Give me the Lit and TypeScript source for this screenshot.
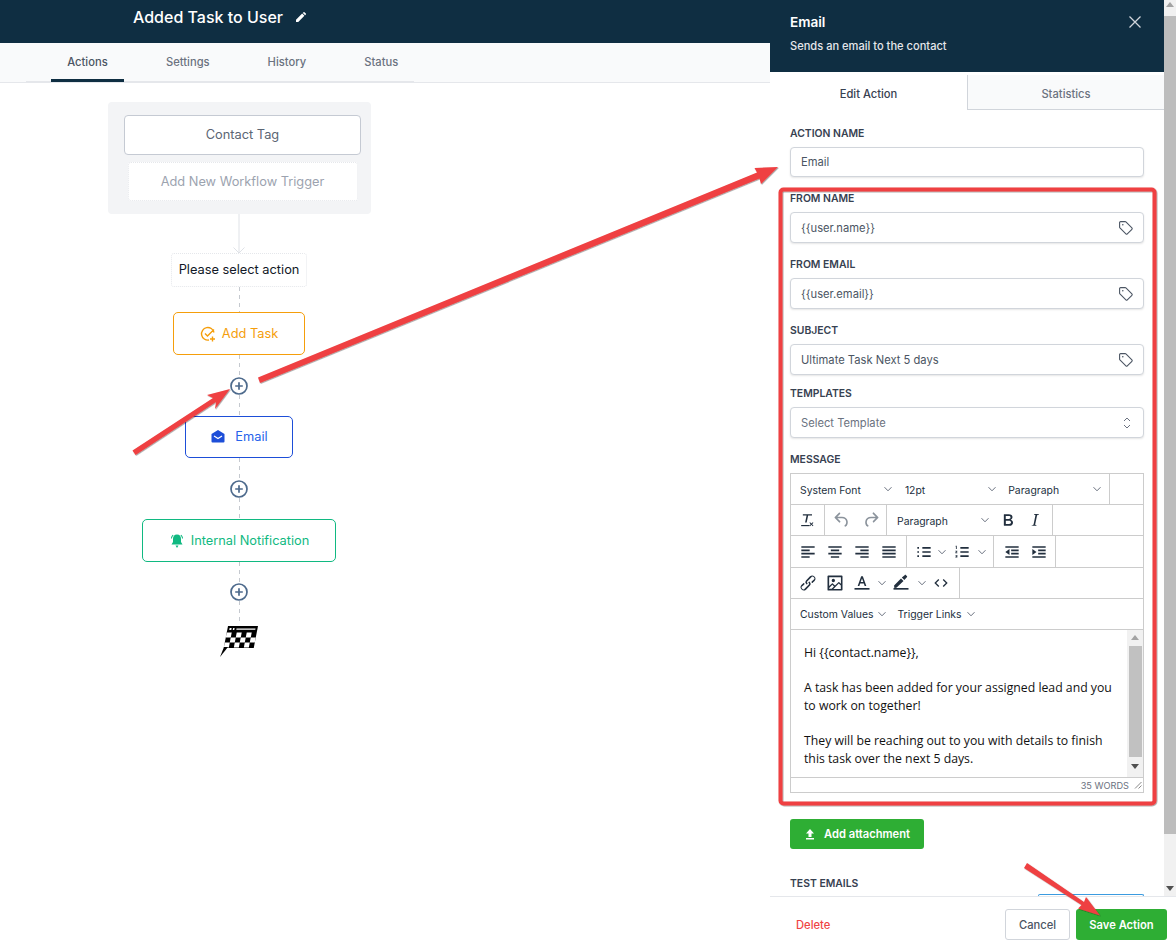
import { LitElement, html, css, svg } from "lit";
import { customElement } from "lit/decorators.js";

const chev = (c = "chev") => html`<svg class=${c} viewBox="0 0 10 10"><path d="M1.5 3.2 5 6.8l3.5-3.6" fill="none" stroke="currentColor" stroke-width="1"/></svg>`;
const tag = html`<svg class="tag" viewBox="0 0 16 16"><path d="M1.6 2.6a1 1 0 0 1 1-1h4.6a1 1 0 0 1 .7.3l6 6a1 1 0 0 1 0 1.4l-4.6 4.6a1 1 0 0 1-1.4 0l-6-6a1 1 0 0 1-.3-.7z" fill="none" stroke="#4b5563" stroke-width="1.1"/><circle cx="4.8" cy="4.8" r=".8" fill="#4b5563"/></svg>`;
const plus = html`<svg class="plus" viewBox="0 0 18 18"><circle cx="9" cy="9" r="8" fill="#fff" stroke="#4d6a8c" stroke-width="1.7"/><path d="M9 5.2v7.6M5.2 9h7.6" stroke="#4d6a8c" stroke-width="1.7"/></svg>`;

const icon = (d: unknown, c = "ic") => html`<svg class=${c} viewBox="0 0 24 24" fill="#222f3e">${d}</svg>`;
const P = (d: string) => svg`<path d=${d} fill-rule="evenodd"/>`;
const I = {
  clear: svg`<path d="M8 5h11v1.6h-4.6L12.6 15h-1.9l1.8-8.4H8z" transform="translate(-1 0)"/><path d="M5 18h10v1.4H5z"/><path d="m15.7 14.6 1.6 1.6 1.6-1.6.8.8-1.6 1.6 1.6 1.6-.8.8-1.6-1.6-1.6 1.6-.8-.8 1.6-1.6-1.6-1.6z"/>`,
  undo: P("M6.4 8H12c3.7 0 6.2 2 6.8 5.1.6 2.7-.4 5.6-2.3 6.8a1 1 0 0 1-1-1.8c1.1-.6 1.8-2.7 1.4-4.6-.5-2.1-2.1-3.5-4.9-3.5H6.4l3.3 3.3a1 1 0 1 1-1.4 1.4l-5-5a1 1 0 0 1 0-1.4l5-5a1 1 0 0 1 1.4 1.4L6.4 8z"),
  redo: P("M17.6 10H12c-2.8 0-4.4 1.4-4.9 3.5-.4 2 .3 4 1.4 4.6a1 1 0 1 1-1 1.8c-2-1.2-2.9-4.1-2.3-6.8.6-3 3-5.1 6.8-5.1h5.6l-3.3-3.3a1 1 0 1 1 1.4-1.4l5 5a1 1 0 0 1 0 1.4l-5 5a1 1 0 0 1-1.4-1.4l3.3-3.3z"),
  bold: P("M7.8 19c-.3 0-.5 0-.6-.2l-.2-.5V5.7c0-.2 0-.4.2-.5l.6-.2h5c1.5 0 2.7.3 3.5 1 .7.6 1.1 1.4 1.1 2.5a3 3 0 0 1-.6 1.9c-.4.6-1 1-1.6 1.2.4.1.9.3 1.3.6s.8.7 1 1.2c.4.4.5 1 .5 1.6 0 1.3-.4 2.3-1.3 3-.8.7-2.1 1-3.8 1H7.8zm5-8.3c.6 0 1.2-.1 1.6-.5.4-.3.6-.7.6-1.3 0-1.1-.8-1.7-2.3-1.7H9.3v3.5h3.4zm.5 6c.7 0 1.3-.1 1.7-.4.4-.4.6-.9.6-1.5s-.2-1-.7-1.4c-.4-.3-1-.4-2-.4H9.4v3.8h4z"),
  italic: P("M16.7 4.7l-.1.9h-.3c-.6 0-1 0-1.4.3-.3.3-.4.6-.5 1.1l-2.1 9.8v.6c0 .5.4.8 1.4.8h.2l-.2.8H8l.2-.8h.2c1.1 0 1.8-.5 2-1.5l2-9.8.1-.5c0-.6-.4-.8-1.4-.8h-.3l.2-.9h5.8z"),
  left: P("M4 5h16v2H4zM4 9h10v2H4zM4 13h16v2H4zM4 17h10v2H4z"),
  center: P("M4 5h16v2H4zM7 9h10v2H7zM4 13h16v2H4zM7 17h10v2H7z"),
  right: P("M4 5h16v2H4zM10 9h10v2H10zM4 13h16v2H4zM10 17h10v2H10z"),
  justify: P("M4 5h16v2H4zM4 9h16v2H4zM4 13h16v2H4zM4 17h16v2H4z"),
  bullets: P("M10 6h10v2H10zM10 11h10v2H10zM10 16h10v2H10zM4 6h2v2H4zM4 11h2v2H4zM4 16h2v2H4z"),
  numbers: P("M10 6h10v2H10zM10 11h10v2H10zM10 16h10v2H10zM4.5 4.5h1.2v3.8H4.7V5.4h-.6zM4 10.500h2.400v.8l-1.400 1.300h1.400v.9H4v-.8l1.400-1.300H4zM4 15.500h2.400v3H4v-.7h1.400v-.4H4.500v-.7h.9v-.4H4z"),
  outdent: P("M4 5h16v2H4zM11 9h9v2h-9zM11 13h9v2h-9zM4 17h16v2H4zM9 8.500v7L4 12z"),
  indent: P("M4 5h16v2H4zM11 9h9v2h-9zM11 13h9v2h-9zM4 17h16v2H4zM4 8.500v7L9 12z"),
  link: P("M6.2 12.300a1 1 0 0 1 1.400 1.400l-2 2a2 2 0 1 0 2.600 2.800l4.800-4.800a1 1 0 0 0 0-1.400 1 1 0 1 1 1.400-1.300 2.900 2.900 0 0 1 0 4L9.600 20a3.900 3.900 0 0 1-5.500-5.500l2-2zm11.600-.6a1 1 0 0 1-1.400-1.400l2-2a2 2 0 1 0-2.600-2.800L11 10.300a1 1 0 0 0 0 1.400 1 1 0 1 1-1.400 1.300 2.900 2.900 0 0 1 0-4L14.400 4a3.900 3.900 0 0 1 5.500 5.500l-2 2z"),
  image: P("M5 15.700l3.300-3.200c.3-.3.7-.3 1 0L12 15l4.100-4c.3-.4.8-.4 1 0l2 1.900V5H5v10.700zM5 18V19h3l2.800-2.900-2-2L5 17.900zm14-3l-2.500-2.400-6.400 6.500H19v-4zM4 3h16c.6 0 1 .4 1 1v16c0 .6-.4 1-1 1H4a1 1 0 0 1-1-1V4c0-.6.400-1 1-1zm6 8a2 2 0 1 0 0-4 2 2 0 0 0 0 4z"),
  color: svg`<path d="M3 18h18v2H3z" fill="#222f3e"/><path fill-rule="evenodd" d="M11 4h2l4.200 11.500h-2l-1-3h-4.400l-1 3h-2zm-.6 6.800h3.200L12 6.500z"/>`,
  hilite: svg`<path d="M3 18h18v2H3z"/><path d="M4 16.500l2.500-.3L15 8l-3-3-8.300 8.500zM13 4l3 3 3-3.300c.6-.6.400-1.200 0-1.600l-1-1c-.5-.5-1.100-.5-1.600 0z" transform="translate(0 1.500)"/>`,
  code: svg`<path transform="translate(2.400 2.400) scale(.8)" d="M9.400 7.400 4.800 12l4.600 4.600L8 18l-6-6 6-6zM14.600 7.400 19.200 12l-4.600 4.600L16 18l6-6-6-6z"/>`,
};

@customElement("app-root")
export class AppRoot extends LitElement {
  static styles = css`
    :host { display: block; width: 1176px; height: 946px; position: relative; overflow: hidden; background: #fff; font-family: Inter, "Liberation Sans", sans-serif; color: #374151; }
    * { box-sizing: border-box; }
    .page { display: flex; height: 946px; }
    .main { width: 770px; flex: none; display: flex; flex-direction: column; }
    .topbar { height: 43px; flex: none; background: #0f2e42; color: #fff; display: flex; align-items: center; padding: 0 0 9px 133px; gap: 13px; font-size: 16px; font-weight: 500; }
    .pencil { width: 10px; height: 10px; }
    .tabbar { height: 40px; flex: none; background: #f9fafb; border-bottom: 1px solid #e5e7eb; padding-left: 26px; }
    .tabs { width: 388px; height: 39px; border-bottom: 1px solid #e5e7eb; display: flex; padding-left: 25px; }
    .tab { height: 39px; font-size: 11.2px; font-weight: 500; color: #6b7280; display: flex; align-items: center; justify-content: center; padding-bottom: 1px; }
    .tab.on { border-bottom: 3px solid #0f2e42; color: #4b5563; padding-top: 2px; padding-bottom: 0; }
    .canvas { width: 478px; padding-top: 19px; display: flex; flex-direction: column; align-items: center; }
    .trigger { width: 263px; height: 112px; margin-left: 1px; background: #f3f4f6; border-radius: 4px; display: flex; flex-direction: column; align-items: center; padding: 13px 10px 0 16px; }
    .trig-main { width: 237px; height: 40px; flex: none; background: #fff; border: 1px solid #c5cad3; border-radius: 4px; display: flex; align-items: center; justify-content: center; font-size: 12.8px; color: #5b6573; padding-bottom: 2px; }
    .trig-add { width: 230px; height: 39px; flex: none; margin-top: 7px; background: #fff; border: 1px dotted #e5e7eb; border-radius: 3px; display: flex; align-items: center; justify-content: center; font-size: 12.8px; color: #9ca3af; }
    .arrowline { width: 14px; height: 40px; display: block; flex: none; }
    .select { width: 136px; height: 34px; flex: none; margin-top: -1px; border: 1px dotted #e5e7eb; border-radius: 3px; display: flex; align-items: center; justify-content: center; font-size: 12.8px; color: #111827; padding-bottom: 2px; }
    .dash { width: 1px; flex: none; background-image: repeating-linear-gradient(to bottom, #c5c9cf 0 4px, transparent 4px 8px); }
    .node { height: 43px; flex: none; border: 1px solid; border-radius: 5px; display: flex; align-items: center; justify-content: center; gap: 6px; font-size: 12.8px; background: #fff; }
    .n1 { width: 132px; border-color: #f59e0b; color: #f59e0b; }
    .n2 { width: 108px; height: 42px; border-color: #1d4ed8; color: #2563eb; gap: 9px; padding-bottom: 2px; }
    .n3 { width: 194px; border-color: #10b981; color: #10b981; }
    .node svg { width: 16px; height: 16px; flex: none; }
    .plus { width: 18px; height: 18px; flex: none; display: block; }
    .flag { width: 40px; height: 33px; flex: none; display: block; margin-top: 5px; margin-left: 1px; }

    .panel { width: 394px; flex: none; height: 946px; display: flex; flex-direction: column; background: #fff; }
    .phead { height: 72px; flex: none; background: #0f2e42; color: #fff; padding: 14px 20px 0; display: flex; justify-content: space-between; }
    .ptitle { font-size: 13.6px; font-weight: 600; line-height: 16px; }
    .psub { font-size: 11.1px; font-weight: 500; line-height: 14px; margin-top: 9px; color: #e5e7eb; }
    .close { width: 16px; height: 16px; margin: 0 1px 0 0; }
    .ptabs { height: 38px; flex: none; display: flex; }
    .ptab { display: flex; align-items: center; justify-content: center; font-size: 11.200px; font-weight: 500; }
    .ptab.a { width: 197px; color: #374151; padding-top: 5px; }
    .ptab.b { flex: 1; margin-top: 3px; background: #f9fafb; color: #6b7280; border-left: 1px solid #d1d5db; border-bottom: 1px solid #d1d5db; padding-top: 3px; }
    .form { flex: 1; min-height: 0; overflow: hidden; padding: 17px 20px 0; }
    .lbl { font-size: 10.400px; font-weight: 600; line-height: 14px; color: #374151; height: 12px; }
    .inp { height: 31px; margin-top: 8px; border: 1px solid #d1d5db; border-radius: 4px; box-shadow: 0 1px 2px rgba(0,0,0,.1); display: flex; align-items: center; justify-content: space-between; padding: 0 9px 0 10px; font-size: 11.200px; color: #4b5563; background: #fff; }
    .inp.first { height: 30px; }
    .field { margin-bottom: 15px; }
    .field.tight { margin-bottom: 12px; }
    .tag { width: 16px; height: 16px; }
    .sel { color: #6b7280; }
    .updown { width: 10px; height: 16px; margin-right: 2px; }
    .ed { height: 320px; margin-top: 8px; border: 1px solid #ccc; display: flex; flex-direction: column; color: #222f3e; }
    .row { display: flex; height: 31px; flex: none; border-bottom: 1px solid #ccc; align-items: stretch; font-size: 10.400px; }
    .row.h32 { height: 32px; }
    .row.links { align-items: center; padding-left: 9px; }
    .grp { display: flex; align-items: center; border-right: 1px solid #ccc; flex: none; }
    .grp .t { padding-top: 2px; }
    .ic { width: 20px; height: 20px; display: block; flex: none; }
    .ic.dim { fill: #8b939c; }
    .cell { width: 27px; display: flex; justify-content: center; flex: none; }
    .chev { width: 10px; height: 10px; flex: none; color: #6b7280; }
    .t { white-space: nowrap; color: #222f3e; }
    .gap { display: flex; }
    .body { flex: 1; min-height: 0; display: flex; }
    .text { flex: 1; padding: 14px 10px 0 13px; font-family: "Open Sans", "Noto Sans", sans-serif; font-size: 12.25px; line-height: 18px; color: #111; }
    .text p { margin: 0 0 17px; }
    .sb { width: 16px; flex: none; background: #f1f1f1; display: flex; flex-direction: column; align-items: center; }
    .sb i { display: block; width: 13px; background: #c1c1c1; }
    .status { height: 15px; flex: none; border-top: 1px solid #ccc; display: flex; justify-content: flex-end; align-items: center; font-size: 9.200px; color: #6b7280; padding-right: 1px; gap: 5px; }
    .grip { width: 8px; height: 8px; }
    .btn-g { height: 30px; background: #2eae34; color: #fff; border-radius: 3px; display: flex; align-items: center; justify-content: center; font-size: 11.200px; font-weight: 600; }
    .attach { width: 134px; margin-top: 26px; gap: 8px; }
    .attach svg { width: 12px; height: 12px; }
    .test { margin-top: 28px; }
    .tip { height: 2px; width: 106px; margin: 5px 0 0 248px; border: 1px solid #3b9be0; border-bottom: 0; border-radius: 3px 3px 0 0; }
    .foot { height: 50px; flex: none; border-top: 1px solid #e5e7eb; width: 406px; background: #fff; display: flex; align-items: flex-start; padding: 12px 9px 0 26px; font-size: 11.200px; position: relative; }
    .del { color: #ef4444; margin-top: 9px; font-weight: 500; flex: 1; }
    .cancel { width: 65px; height: 31px; border: 1px solid #d1d5db; border-radius: 3px; display: flex; align-items: center; justify-content: center; font-weight: 500; color: #4b5563; margin-right: 6px; background: #fff; }
    .save { width: 91px; height: 31px; }
    .vbar { width: 12px; flex: none; height: 896px; background: #f1f1f1; display: flex; flex-direction: column; align-items: center; }
    .vbar b { display: block; width: 12px; height: 818px; background: #bdbdbd; margin-top: 9px; }
    .ua { width: 0; height: 0; border-left: 4px solid transparent; border-right: 4px solid transparent; }
    .ua.up { border-bottom: 5px solid #a3a3a3; margin-top: 2px; }
    .ua.dn { border-top: 5px solid #505050; }
    .overlay { position: absolute; left: 0; top: 0; width: 1176px; height: 946px; pointer-events: none; }
  `;

  field(label: string, value: string, first = false) {
    return html`<div class="field ${label === "SUBJECT" ? "tight" : ""}"><div class="lbl">${label}</div><div class="inp ${first ? "first" : ""}"><span>${value}</span>${first ? "" : tag}</div></div>`;
  }

  cell(d: unknown, w = 27, dim = false) {
    return html`<span class="cell" style="width:${w}px">${icon(d, dim ? "ic dim" : "ic")}</span>`;
  }

  flagCells() {
    const out = [];
    for (let y = 0; y < 3; y++) for (let x = 0; x < 6; x++) if ((x + y) % 2 === 0) out.push(svg`<rect x=${x * 5} y=${6.5 + y * 5} width="5" height="5"/>`);
    return out;
  }

  render() {
    return html`
      <div class="page">
        <div class="main">
          <div class="topbar"><span>Added Task to User</span>
            <svg class="pencil" viewBox="0 0 12 12"><path d="M0 12v-2.700L7.400 1.900l2.700 2.700L2.700 12zM8.200 1.100 9.100.2a.7.7 0 0 1 1 0l1.700 1.700a.7.7 0 0 1 0 1l-.9.900z" fill="#fff"/></svg>
          </div>
          <div class="tabbar"><div class="tabs">
            <div class="tab on" style="width:73px">Actions</div>
            <div class="tab" style="margin-left:42px">Settings</div>
            <div class="tab" style="margin-left:58px">History</div>
            <div class="tab" style="margin-left:58px">Status</div>
          </div></div>
          <div class="canvas">
            <div class="trigger"><div class="trig-main">Contact Tag</div><div class="trig-add">Add New Workflow Trigger</div></div>
            <svg class="arrowline" viewBox="0 0 14 40"><path d="M7 0v39M1.500 33.500 7 39l5.500-5.500" fill="none" stroke="#dfe2e7" stroke-width="1"/></svg>
            <div class="select">Please select action</div>
            <div class="dash" style="height:25px"></div>
            <div class="node n1"><svg viewBox="0 0 16 16" fill="none" stroke="#f59e0b" stroke-width="1.400"><path d="M14 6.500A6.300 6.300 0 1 0 9 14M5 7.500l2.500 2.500L14 3.500M12.500 10.500v5M10 13h5"/></svg>Add Task</div>
            <div class="dash" style="height:22px"></div>${plus}<div class="dash" style="height:21px"></div>
            <div class="node n2"><svg viewBox="0 0 16 16"><path d="M1.500 6 8 2l6.500 4v7.500a1 1 0 0 1-1 1h-11a1 1 0 0 1-1-1z" fill="#1d4ed8"/><path d="m4 8 4 2.500L12 8" stroke="#fff" stroke-width="1.200" fill="none"/></svg>Email</div>
            <div class="dash" style="height:22px"></div>${plus}<div class="dash" style="height:21px"></div>
            <div class="node n3"><svg viewBox="0 0 16 16" fill="#10b981"><path d="M8 1.500c2.800 0 4 2 4 4.500v3l1.500 2.500h-11L4 9V6c0-2.500 1.200-4.500 4-4.500zM6.500 12.500h3L8 15zM2 5.500c0-1.500.7-2.800 1.800-3.700l.7.700C3.600 3.300 3 4.300 3 5.500zM14 5.500c0-1.500-.7-2.800-1.800-3.700l-.7.700c.9.800 1.500 1.800 1.500 3z"/></svg>Internal Notification</div>
            <div class="dash" style="height:21px"></div>${plus}<div class="dash" style="height:20px"></div>
            <svg class="flag" viewBox="0 0 40 33">
              <g transform="translate(8 0) skewX(-11)"><rect width="30" height="22"/><g fill="#fff"><rect x="2" y="2" width="2" height="2"/><rect x="5.500" y="2" width="1.500" height="2"/><rect x="9" y="2.500" width="19" height="1.200"/>${this.flagCells()}</g></g>
              <path d="M0 31 4 21h4z"/>
            </svg>
          </div>
        </div>

        <div class="panel">
          <div class="phead"><div><div class="ptitle">Email</div><div class="psub">Sends an email to the contact</div></div>
            <svg class="close" viewBox="0 0 16 16"><path d="M2.500 2.500l11 11M13.500 2.500l-11 11" stroke="#d1d5db" stroke-width="1.300" fill="none"/></svg>
          </div>
          <div class="ptabs"><div class="ptab a">Edit Action</div><div class="ptab b">Statistics</div></div>
          <div class="form">
            ${this.field("ACTION NAME", "Email", true)}
            ${this.field("FROM NAME", "{{user.name}}")}
            ${this.field("FROM EMAIL", "{{user.email}}")}
            ${this.field("SUBJECT", "Ultimate Task Next 5 days")}
            <div class="field"><div class="lbl">TEMPLATES</div><div class="inp sel"><span>Select Template</span>
              <svg class="updown" viewBox="0 0 10 16"><path d="M2 6l3-3 3 3M2 10l3 3 3-3" fill="none" stroke="#6b7280" stroke-width="1"/></svg></div></div>
            <div class="lbl">MESSAGE</div>
            <div class="ed">
              <div class="row">
                <div class="grp" style="width:319px">
                  <span class="t" style="margin-left:9px">System Font</span><span class="gap" style="margin-left:22px">${chev()}</span>
                  <span class="t" style="margin-left:12px">12pt</span><span class="gap" style="margin-left:62px">${chev()}</span>
                  <span class="t" style="margin-left:11px">Paragraph</span><span class="gap" style="margin-left:33px">${chev()}</span>
                </div>
              </div>
              <div class="row">
                <div class="grp" style="width:34px;padding-left:2px">${this.cell(I.clear)}</div>
                <div class="grp" style="width:62px;padding-left:2px">${this.cell(I.undo, 29, true)}${this.cell(I.redo, 29, true)}</div>
                <div class="grp" style="width:166px;padding-left:10px"><span class="t">Paragraph</span><span class="gap" style="margin-left:32px;margin-right:5px">${chev()}</span>${this.cell(I.bold)}${this.cell(I.italic)}</div>
              </div>
              <div class="row h32">
                <div class="grp" style="width:116px;padding-left:3px">${this.cell(I.left)}${this.cell(I.center)}${this.cell(I.right)}${this.cell(I.justify)}</div>
                <div class="grp" style="width:87px;padding-left:3px">${this.cell(I.bullets)}${chev()}${this.cell(I.numbers, 30)}${chev()}</div>
                <div class="grp" style="width:62px;padding-left:4px">${this.cell(I.outdent)}${this.cell(I.indent)}</div>
              </div>
              <div class="row">
                <div class="grp" style="width:169px;padding-left:3px">${this.cell(I.link)}${this.cell(I.image)}${this.cell(I.color)}<span class="gap" style="margin-left:2px">${chev()}</span>${this.cell(I.hilite, 28)}<span class="gap" style="margin-left:2px">${chev()}</span>${this.cell(I.code, 28)}</div>
              </div>
              <div class="row links">
                <span class="t">Custom Values</span><span class="gap" style="margin-left:4px">${chev()}</span>
                <span class="t" style="margin-left:10px">Trigger Links</span><span class="gap" style="margin-left:4px">${chev()}</span>
              </div>
              <div class="body">
                <div class="text">
                  <p>Hi {{contact.name}},</p>
                  <p>A task has been added for your assigned lead and you to work on together!</p>
                  <p>They will be reaching out to you with details to finish this task over the next 5 days.</p>
                </div>
                <div class="sb"><span class="ua up" style="margin-top:5px;margin-bottom:6px"></span><i style="height:111px"></i><span class="ua dn" style="margin-top:7px"></span></div>
              </div>
              <div class="status"><span>35 WORDS</span><svg class="grip" viewBox="0 0 8 8"><path d="M7.500 1 1 7.500M7.500 4.500 4.500 7.500" stroke="#888" stroke-width="1"/></svg></div>
            </div>
            <div class="btn-g attach"><svg viewBox="0 0 12 12"><path d="M6 1 10 5.500H7.500V9h-3V5.500H2zM2 10h8v1.500H2z" fill="#fff"/></svg>Add attachment</div>
            <div class="lbl test">TEST EMAILS</div>
            <div class="tip"></div>
          </div>
          <div class="foot"><span class="del">Delete</span><div class="cancel">Cancel</div><div class="btn-g save">Save Action</div></div>
        </div>

        <div class="vbar"><span class="ua up"></span><b></b><span class="ua dn" style="margin-top:52px"></span></div>
      </div>

      <svg class="overlay" viewBox="0 0 1176 946">
        <defs><filter id="s" x="-5%" y="-5%" width="110%" height="110%"><feDropShadow dx="0.700" dy="0.700" stdDeviation="0.500" flood-color="#000" flood-opacity=".45"/></filter></defs>
        <rect x="780.500" y="189.500" width="374" height="614" rx="3" fill="none" stroke="#ef4142" stroke-width="4" filter="url(#s)"/>
        <g fill="#ef4142" filter="url(#s)">
          <path d="M132.500 450.500 213 398l-6-3 23-6-15 20 1-7-80.500 53z"/>
          <path d="M258 377.500 757 172.500l-2.500-4.500 23.500-1-17 17-1.500-5.500L260 383z"/>
          <path d="M1027 863 1084 902l2-5 14 18.500-22-7 3.500-3.500L1024 868z"/>
        </g>
      </svg>
    `;
  }
}
